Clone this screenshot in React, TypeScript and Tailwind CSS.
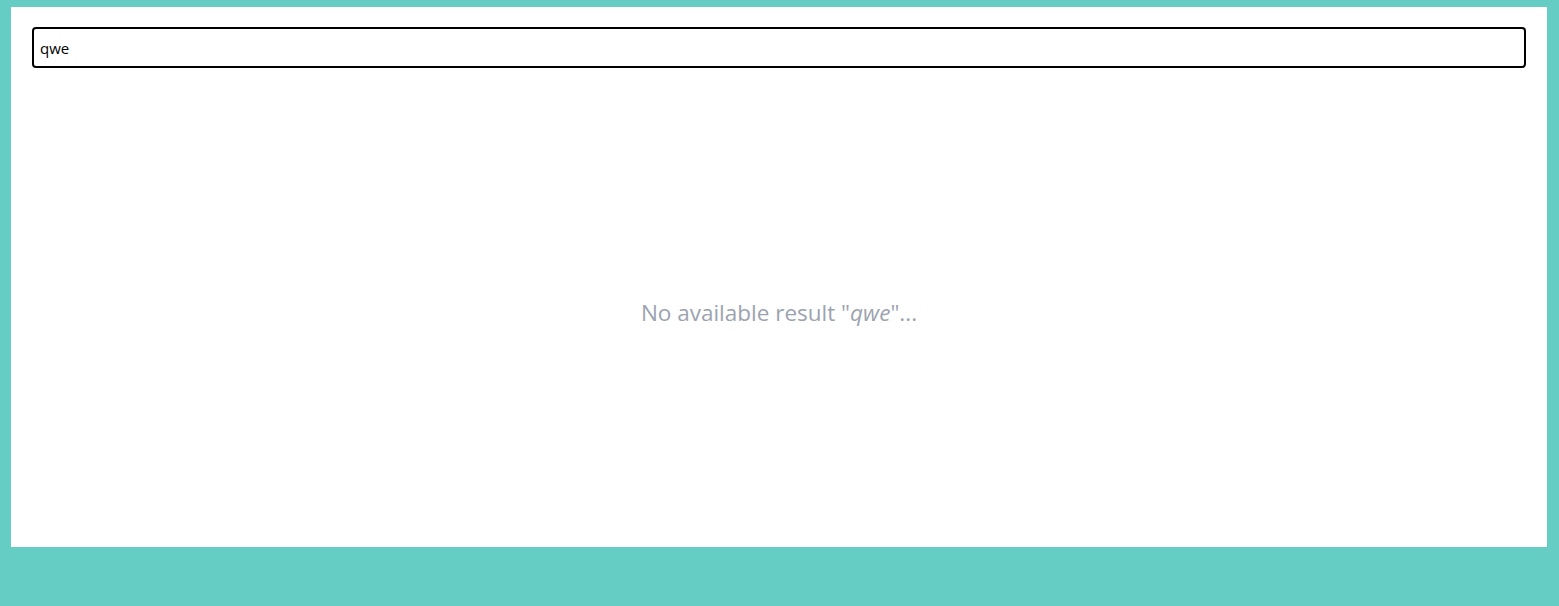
import { useState } from 'react';

export default function App() {
  const [query, setQuery] = useState('qwe');

  return (
    <div className="min-h-[606px] bg-[#66cdc4] pt-[7px] pl-[11px] pr-[12px] font-['Open_Sans',sans-serif]">
      <div className="flex h-[540px] flex-col bg-white px-[21px] pt-[20px]">
        <input
          autoFocus
          value={query}
          onChange={(e) => setQuery(e.target.value)}
          className="h-[41px] w-full rounded-[4px] border-2 border-black px-[6px] text-[15px] text-black outline-none"
        />
        <div className="flex flex-1 items-center justify-center pb-[10px] pt-[20px]">
          <p className="text-[22.5px] text-[#9ca3af]">
            No available result "<em>{query}</em>"...
          </p>
        </div>
      </div>
    </div>
  );
}
